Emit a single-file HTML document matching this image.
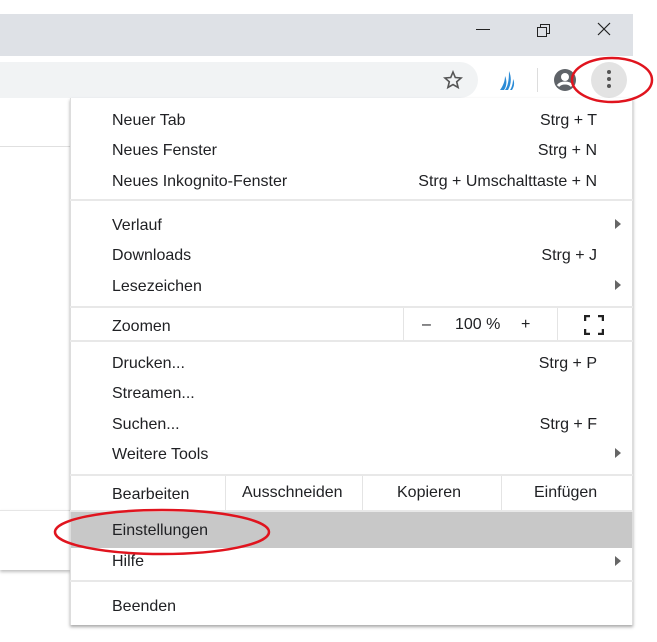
<!DOCTYPE html>
<html><head><meta charset="utf-8"><style>
*{margin:0;padding:0;box-sizing:border-box}
body{width:657px;height:642px;background:#fff;position:relative;overflow:hidden;font-family:"Liberation Sans",sans-serif;font-size:16px;color:#202124}
.a{position:absolute}
.t{position:absolute;left:112px;line-height:20px;margin-top:1px}
.s{position:absolute;right:60px;line-height:20px;margin-top:1px}
.sep{position:absolute;left:70px;width:563px;height:2px;background:#e8e8e8}
.arr{position:absolute;left:615px;width:0;height:0;border-top:5px solid transparent;border-bottom:5px solid transparent;border-left:6px solid #666}
.vd{position:absolute;width:1px;background:#e4e4e4}
</style></head><body>
<div class="a" style="left:0;top:14px;width:633px;height:42px;background:#dee1e6"></div>
<div class="a" style="left:476px;top:29px;width:14px;height:1px;background:#222"></div>
<div class="a" style="left:540px;top:24px;width:10px;height:10px;border:1px solid #222"></div>
<div class="a" style="left:537px;top:27px;width:10px;height:10px;border:1px solid #222;background:#dee1e6"></div>
<svg class="a" style="left:597px;top:22px" width="14" height="14"><path d="M1 1L13 13M13 1L1 13" stroke="#222" stroke-width="1.2"/></svg>
<div class="a" style="left:0;top:62px;width:478px;height:36px;background:#f1f3f4;border-radius:0 18px 18px 0"></div>
<svg class="a" style="left:443px;top:70px" width="20" height="20"><path d="M10 2l2.3 5.5 5.8.5-4.4 3.8 1.4 5.7L10 14.5 4.9 17.5l1.4-5.7L1.9 8l5.8-.5z" fill="none" stroke="#555" stroke-width="1.6"/></svg>
<svg class="a" style="left:497px;top:68px" width="20" height="24"><path d="M3 22C6 18 8 13 8 8 10 12 10 18 7 22ZM8 22C11 18 12 12 12 3 15 10 14 17 11 22ZM13 22C15 19 16 15 16 11 18 15 17 19 15 22Z" fill="#2b8bd6"/></svg>
<div class="a" style="left:537px;top:68px;width:1px;height:24px;background:#ddd"></div>
<svg class="a" style="left:553px;top:68px" width="24" height="24"><circle cx="12" cy="12" r="11" fill="#5f6368"/><circle cx="12" cy="9" r="4" fill="#fff"/><path d="M5 18c3-4 11-4 14 0" stroke="#fff" stroke-width="3" fill="none"/></svg>
<div class="a" style="left:591px;top:62px;width:36px;height:36px;border-radius:50%;background:#e3e3e3"></div>
<div class="a" style="left:607px;top:70px;width:4px;height:4px;border-radius:50%;background:#555;box-shadow:0 7px 0 #555,0 14px 0 #555"></div>
<div class="a" style="left:0;top:146px;width:70px;height:1px;background:#e0e0e0"></div>
<div class="a" style="left:0;top:510px;width:70px;height:60px;background:#fff;box-shadow:0 2px 3px rgba(0,0,0,.25);border-top:1px solid #e6e6e6"></div>
<div class="a" style="left:70px;top:98px;width:563px;height:527px;background:#fff;border-left:1px solid #ddd;border-right:1px solid #ddd;box-shadow:0 2px 3px rgba(0,0,0,.35)"></div>
<div class="t" style="top:110px">Neuer Tab</div><div class="s" style="top:110px">Strg + T</div>
<div class="t" style="top:140px">Neues Fenster</div><div class="s" style="top:140px">Strg + N</div>
<div class="t" style="top:171px">Neues Inkognito-Fenster</div><div class="s" style="top:171px">Strg + Umschalttaste + N</div>
<div class="sep" style="top:199px"></div>
<div class="t" style="top:215px">Verlauf</div><div class="arr" style="top:219px"></div>
<div class="t" style="top:245px">Downloads</div><div class="s" style="top:245px">Strg + J</div>
<div class="t" style="top:276px">Lesezeichen</div><div class="arr" style="top:280px"></div>
<div class="sep" style="top:306px"></div>
<div class="t" style="top:316px">Zoomen</div>
<div class="vd" style="left:403px;top:308px;height:32px"></div>
<div class="vd" style="left:557px;top:308px;height:32px"></div>
<div class="a" style="left:422px;top:315px;line-height:20px">–</div>
<div class="a" style="left:455px;top:315px;line-height:20px">100 %</div>
<div class="a" style="left:521px;top:315px;line-height:20px">+</div>
<svg class="a" style="left:584px;top:315px" width="20" height="20"><path d="M1 6V1h5M14 1h5v5M19 14v5h-5M6 19H1v-5" fill="none" stroke="#222" stroke-width="2.5"/></svg>
<div class="sep" style="top:340px"></div>
<div class="t" style="top:353px">Drucken...</div><div class="s" style="top:353px">Strg + P</div>
<div class="t" style="top:383px">Streamen...</div>
<div class="t" style="top:414px">Suchen...</div><div class="s" style="top:414px">Strg + F</div>
<div class="t" style="top:444px">Weitere Tools</div><div class="arr" style="top:448px"></div>
<div class="sep" style="top:474px"></div>
<div class="t" style="top:484px">Bearbeiten</div>
<div class="vd" style="left:225px;top:476px;height:34px"></div>
<div class="vd" style="left:362px;top:476px;height:34px"></div>
<div class="vd" style="left:501px;top:476px;height:34px"></div>
<div class="a" style="left:242px;top:483px;line-height:20px">Ausschneiden</div>
<div class="a" style="left:397px;top:483px;line-height:20px">Kopieren</div>
<div class="a" style="left:534px;top:483px;line-height:20px">Einfügen</div>
<div class="sep" style="top:510px"></div>
<div class="a" style="left:71px;top:512px;width:561px;height:36px;background:#c8c8c8"></div>
<div class="t" style="top:520px">Einstellungen</div>
<div class="t" style="top:551px">Hilfe</div><div class="arr" style="top:556px"></div>
<div class="sep" style="top:580px"></div>
<div class="t" style="top:596px">Beenden</div>
<svg class="a" style="left:0;top:0" width="657" height="642"><ellipse cx="612" cy="80" rx="40" ry="22" fill="none" stroke="#e0141e" stroke-width="2.5"/><ellipse cx="162" cy="532" rx="107" ry="22" fill="none" stroke="#e0141e" stroke-width="2.5"/></svg>
</body></html>
